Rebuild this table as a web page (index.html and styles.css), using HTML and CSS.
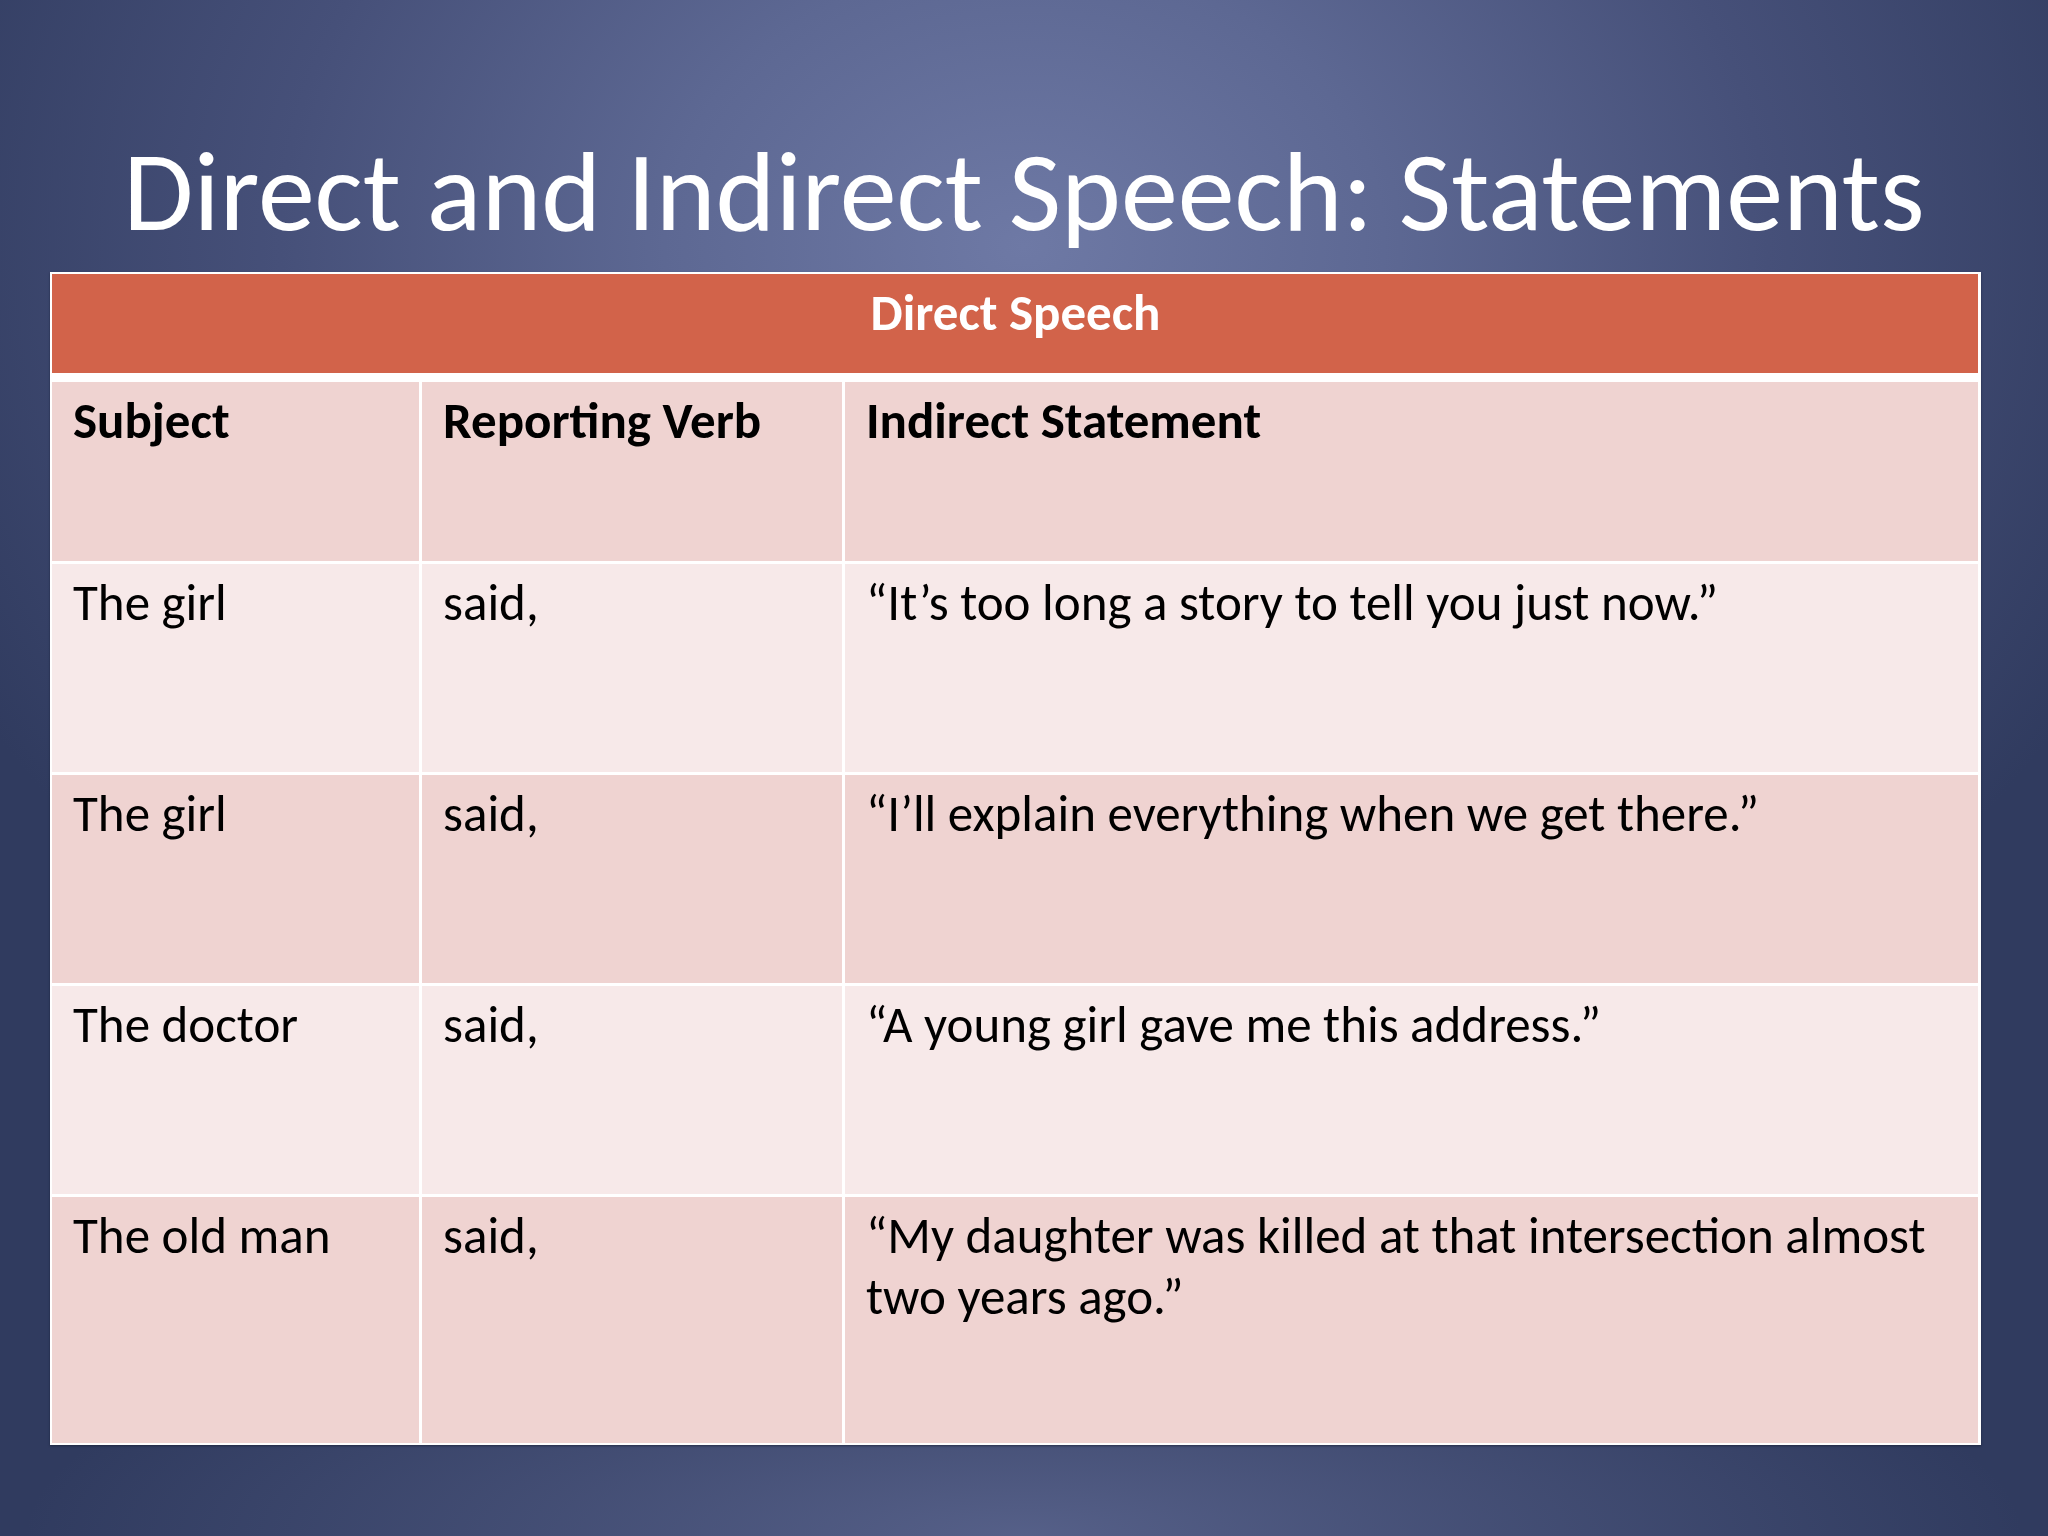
FILE: index.html
```html
<!DOCTYPE html>
<html lang="en">
<head>
<meta charset="utf-8">
<title>Direct and Indirect Speech: Statements</title>
<link rel="stylesheet" href="styles.css">
</head>
<body>
<div class="slide">
  <h1 class="title">Direct and Indirect Speech: Statements</h1>
  <div class="table">
    <div class="cell caption">Direct Speech</div>
    <div class="cell head dark">Subject</div>
    <div class="cell head dark">Reporting Verb</div>
    <div class="cell head dark">Indirect Statement</div>

    <div class="cell light">The girl</div>
    <div class="cell light">said,</div>
    <div class="cell light">“It’s too long a story to tell you just now.”</div>

    <div class="cell dark">The girl</div>
    <div class="cell dark">said,</div>
    <div class="cell dark">“I’ll explain everything when we get there.”</div>

    <div class="cell light">The doctor</div>
    <div class="cell light">said,</div>
    <div class="cell light">“A young girl gave me this address.”</div>

    <div class="cell dark">The old man</div>
    <div class="cell dark">said,</div>
    <div class="cell dark">“My daughter was killed at that intersection almost two years ago.”</div>
  </div>
</div>
</body>
</html>
```
FILE: styles.css
```css
html, body {
  margin: 0;
  padding: 0;
}
body {
  width: 2048px;
  height: 1536px;
  overflow: hidden;
  font-family: "Carlito", "Lato", "Open Sans", sans-serif;
}
.slide {
  width: 2048px;
  height: 1536px;
  box-sizing: border-box;
  background:
    radial-gradient(ellipse 1000px 260px at 50% 100%, rgba(98, 108, 150, 0.75) 0%, rgba(98, 108, 150, 0) 100%),
    radial-gradient(ellipse 1200px 950px at 50% 16%, #6e79a5 0%, #5d6893 30%, #465079 62%, #303b5f 100%);
}
.title {
  margin: 0;
  height: 272px;
  box-sizing: border-box;
  padding-top: 134px;
  font-size: 114px;
  line-height: 114px;
  font-weight: 400;
  color: #ffffff;
  text-align: center;
  white-space: nowrap;
}
.table {
  margin-left: 50px;
  width: 1931px;
  box-sizing: border-box;
  padding: 2px;
  background: #ffffff;
  display: grid;
  grid-template-columns: 367px 420px 1133px;
  grid-template-rows: 105px 179px 208px 208px 208px 246px;
  gap: 3px;
  box-shadow: 0 1px 2px rgba(20, 25, 45, 0.6);
}
.cell {
  box-sizing: border-box;
  padding: 8px 20px 0 21px;
  font-size: 51px;
  line-height: 61px;
  color: #000000;
}
.caption {
  grid-column: 1 / 4;
  margin-bottom: 6px;
  background: #d2634a;
  color: #ffffff;
  font-weight: 700;
  text-align: center;
}
.head {
  font-weight: 700;
}
.dark {
  background: #efd3d1;
}
.light {
  background: #f7e9e9;
}
```
